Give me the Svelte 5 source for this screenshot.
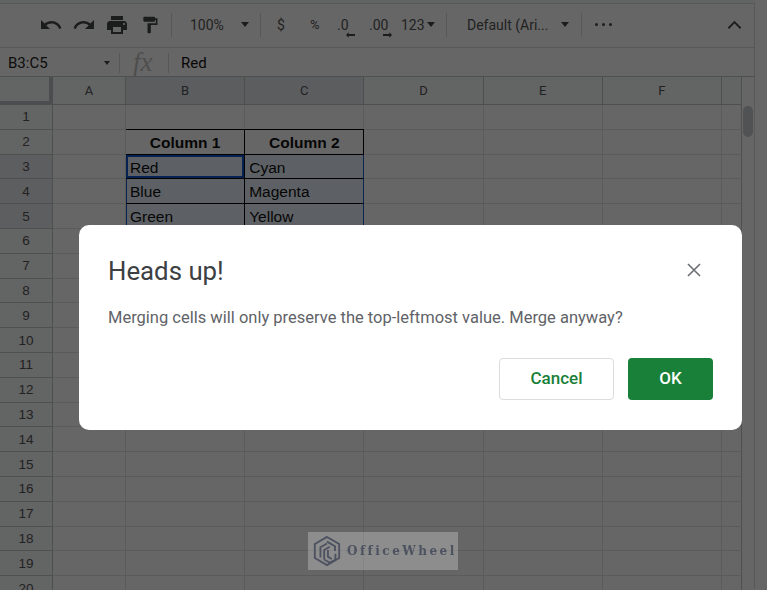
<script>
  const cols = ['A', 'B', 'C', 'D', 'E', 'F'];
  const rows = Array.from({ length: 20 }, (_, i) => i + 1);
  const data = {
    2: { B: 'Column 1', C: 'Column 2' },
    3: { B: 'Red', C: 'Cyan' },
    4: { B: 'Blue', C: 'Magenta' },
    5: { B: 'Green', C: 'Yellow' }
  };
  const icons = {
    undo: 'M12.5 8c-2.65 0-5.05.99-6.9 2.6L2 7v9h9l-3.62-3.62c1.39-1.16 3.16-1.88 5.12-1.88 3.54 0 6.55 2.31 7.6 5.5l2.37-.78C21.08 11.03 17.15 8 12.5 8z',
    redo: 'M18.4 10.6C16.55 8.99 14.15 8 11.5 8c-4.65 0-8.58 3.03-9.96 7.22L3.9 16c1.05-3.19 4.05-5.5 7.6-5.5 1.95 0 3.73.72 5.12 1.88L13 16h9V7l-3.6 3.6z',
    print: 'M19 8H5c-1.66 0-3 1.34-3 3v6h4v4h12v-4h4v-6c0-1.66-1.34-3-3-3zm-3 11H8v-5h8v5zm3-7c-.55 0-1-.45-1-1s.45-1 1-1 1 .45 1 1-.45 1-1 1zm-1-9H6v4h12V3z',
    paint: 'M18 4V3c0-.55-.45-1-1-1H5c-.55 0-1 .45-1 1v4c0 .55.45 1 1 1h12c.55 0 1-.45 1-1V6h1v4H9v11c0 .55.45 1 1 1h2c.55 0 1-.45 1-1v-9h8V4h-3z'
  };
  function cellClass(r, c) {
    const out = ['cell'];
    if (r >= 2 && r <= 5 && (c === 'B' || c === 'C')) out.push('boxed');
    if (r === 2 && (c === 'B' || c === 'C')) out.push('head');
    if (r >= 3 && r <= 5 && (c === 'B' || c === 'C')) out.push('sel');
    if (r === 3 && c === 'B') out.push('active');
    if (c === 'B' && r >= 3 && r <= 5) out.push('edgeL');
    if (c === 'C' && r >= 3 && r <= 5) out.push('edgeR');
    return out.join(' ');
  }
</script>

<div class="page">
  <div class="topstrip"></div>
  <div class="toolbar">
    <svg class="ic undo" viewBox="0 0 24 24"><path d={icons.undo} /></svg>
    <svg class="ic redo" viewBox="0 0 24 24"><path d={icons.redo} /></svg>
    <svg class="ic print" viewBox="0 0 24 24"><path d={icons.print} /></svg>
    <svg class="ic paint" viewBox="0 0 24 24"><path d={icons.paint} /></svg>
    <span class="sep s1"></span>
    <span class="tt zoomv">100%</span>
    <span class="caret c1"></span>
    <span class="sep s2"></span>
    <span class="tt dollar">$</span>
    <span class="tt pct">%</span>
    <span class="dec d1">.0<svg viewBox="0 0 10 6"><path d="M0 3l3-3v2h7v2H3v2z" /></svg></span>
    <span class="dec d2">.00<svg viewBox="0 0 10 6"><path d="M10 3L7 0v2H0v2h7v2z" /></svg></span>
    <span class="tt num">123</span>
    <span class="caret c2"></span>
    <span class="sep s3"></span>
    <span class="tt font">Default (Ari...</span>
    <span class="caret c3"></span>
    <span class="sep s4"></span>
    <span class="dots"><i></i><i></i><i></i></span>
    <svg class="chev" viewBox="0 0 16 10"><path d="M1.5 8.5L8 2l6.5 6.5" /></svg>
  </div>
  <div class="formula">
    <span class="namebox">B3:C5</span>
    <span class="caret small"></span>
    <span class="fsep a"></span>
    <span class="fx">fx</span>
    <span class="fsep b"></span>
    <span class="fval">Red</span>
  </div>
  <div class="sheet">
    <div class="grid">
      <div class="corner"></div>
      {#each cols as c}
        <div class="colhead" class:hl={c === 'B' || c === 'C'}>{c}</div>
      {/each}
      <div class="colhead blank"></div>
      {#each rows as r}
        <div class="rowhead" class:hl={r >= 3 && r <= 5}>{r}</div>
        {#each cols as c}
          <div class={cellClass(r, c)}>{data[r]?.[c] ?? ''}</div>
        {/each}
        <div class="cell blank"></div>
      {/each}
    </div>
    <div class="scrollcol"><div class="thumb"></div></div>
  </div>
</div>

<div class="scrim">
  <div class="dialog">
    <div class="titlerow">
      <h2>Heads up!</h2>
      <svg class="close" viewBox="0 0 14 14"><path d="M1 1l12 12M13 1L1 13" /></svg>
    </div>
    <p>Merging cells will only preserve the top-leftmost value. Merge anyway?</p>
    <div class="actions">
      <button class="cancel">Cancel</button>
      <button class="ok">OK</button>
    </div>
  </div>
</div>

<div class="mark">
  <svg viewBox="0 0 32 34">
    <path d="M16 2L29 9.5V24.5L16 32L3 24.5V9.5Z" />
    <path d="M16 7L24.5 12V17M9 24V13L16 9M13 26V16L19 12.500M13 26L19 29.500L25 26V20M17 16V23L21 25.500" />
  </svg>
  <span>OfficeWheel</span>
</div>

<style>
  :global(body) { margin: 0; background: #fff; overflow: hidden; }
  .page {
    width: 767px; height: 590px; overflow: hidden; background: #fff;
    font-family: "Liberation Sans", Arial, sans-serif; color: #111;
  }
  .topstrip { height: 3px; width: 755px; border-bottom: 1px solid #dadce0; background: #f6f7f8; }
  .toolbar {
    width: 755px; height: 44px; box-sizing: border-box; display: flex; align-items: center; padding-bottom: 2px;
    border-bottom: 1px solid #dadce0; border-right: 1px solid #dadce0; color: #555;
    font-family: Roboto, sans-serif;
  }
  .ic { fill: #444746; flex: none; }
  .undo { width: 24px; height: 24px; margin-left: 39px; }
  .redo { width: 24px; height: 24px; margin-left: 9px; }
  .print { width: 24px; height: 24px; margin-left: 9px; }
  .paint { width: 20px; height: 20px; margin-left: 11px; }
  .sep { width: 1px; height: 24px; background: #dadce0; flex: none; }
  .s1 { margin-left: 11px; }
  .s2 { margin-left: 11px; }
  .s3 { margin-left: 11px; }
  .s4 { margin-left: 12px; }
  .tt { font-size: 14px; flex: none; white-space: nowrap; }
  .zoomv { margin-left: 18px; width: 36px; }
  .caret { width: 0; height: 0; border: 4.5px solid transparent; border-top: 5px solid #444746; border-bottom: 0; flex: none; }
  .c1 { margin-left: 15px; }
  .dollar { margin-left: 16px; width: 8px; }
  .pct { margin-left: 25px; width: 12px; font-size: 13px; }
  .dec { position: relative; flex: none; font-size: 14px; }
  .dec svg { position: absolute; width: 9px; height: 6px; top: 15px; fill: #444746; }
  .d1 { margin-left: 15px; width: 20px; }
  .d1 svg { left: 9px; }
  .d2 { margin-left: 12px; width: 24px; }
  .d2 svg { left: 14px; }
  .num { margin-left: 8px; width: 24px; }
  .c2 { margin-left: 2px; }
  .font { margin-left: 20px; width: 85px; }
  .c3 { margin-left: 9px; }
  .dots { display: flex; gap: 4px; margin-left: 13px; flex: none; }
  .dots i { width: 3px; height: 3px; border-radius: 50%; background: #444746; }
  .chev { width: 15px; height: 10px; margin-left: 115px; fill: none; stroke: #444746; stroke-width: 2; flex: none; }

  .formula {
    width: 755px; height: 29px; box-sizing: border-box; display: flex; align-items: center; padding-top: 1px;
    border-bottom: 1px solid #c4c7c5; border-right: 1px solid #dadce0; font-family: Roboto, sans-serif;
  }
  .namebox { margin-left: 8px; width: 95px; font-size: 15px; color: #222; }
  .caret.small { border-width: 3px; border-top-width: 4px; border-bottom: 0; margin-left: 1px; }
  .fsep { width: 1px; height: 20px; background: #dadce0; flex: none; }
  .fsep.a { margin-left: 9px; }
  .fx { margin-left: 13px; width: 35px; font: italic 27px "Liberation Serif", serif; color: #c4c4c4; }
  .fsep.b { margin-left: 0; }
  .fval { margin-left: 12px; font-size: 15px; color: #111; }

  .sheet { display: flex; width: 755px; }
  .grid {
    display: grid; flex: none;
    grid-template-columns: 53px 73px 119.2px 119.2px 119.2px 119.2px 119.2px 20px;
    grid-auto-rows: 24.8px;
    grid-template-rows: 28px;
  }
  .corner { background: #f8f9fa; border-right: 4px solid #bdc1c6; border-bottom: 4px solid #bdc1c6; box-sizing: border-box; }
  .colhead, .rowhead {
    display: flex; align-items: center; justify-content: center; box-sizing: border-box;
    background: #f8f9fa; color: #555; font-size: 13px; font-family: Roboto, sans-serif;
    border-right: 1px solid #c4c7c5; border-bottom: 1px solid #c4c7c5;
  }
  .rowhead { font-family: "Liberation Sans", sans-serif; font-size: 13.500px; }
  .colhead.hl { background: #e3e8ee; }
  .rowhead.hl { background: #e8eaed; }
  .colhead.blank { border-right: 1px solid #c4c7c5; }
  .cell {
    box-sizing: border-box; border-right: 1px solid #e2e3e3; border-bottom: 1px solid #e2e3e3;
    font-size: 15.500px; line-height: 25px; padding-left: 4px; white-space: nowrap; overflow: hidden;
    position: relative;
  }
  .boxed { border-right-color: #000; border-bottom-color: #000; }
  .head { font-weight: 700; text-align: center; padding-left: 0; border-top: 1px solid #000; margin-top: -1px; height: calc(100% + 1px); }
  .sel { background: #e8f0fa; }
  .edgeL { box-shadow: inset 1px 0 0 #1a5cc4; }
  .edgeR { border-right-color: #1a5cc4; }
  .active { box-shadow: inset 0 0 0 2px #1155cc; }
  .cell.blank { border-right-color: #c4c7c5; }
  .scrollcol { flex: none; width: 13px; box-sizing: border-box; padding: 29px 1px 0 1px; border-right: 1px solid #dadce0; height: 512px; }
  .thumb { height: 31px; border-radius: 6px; background: #c8ccd0; }

  .scrim {
    position: fixed; inset: 0; background: rgba(0, 0, 0, 0.6); box-sizing: border-box;
    padding: 225px 0 0 79px;
  }
  .dialog {
    width: 663px; height: 205px; box-sizing: border-box; background: #fff; border-radius: 10px;
    padding: 30px 29px 0;
    font-family: Roboto, sans-serif;
  }
  .titlerow { display: flex; align-items: center; justify-content: space-between; height: 32px; }
  h2 { margin: 0; font-size: 25.800px; font-weight: 400; color: #3c4043; line-height: 32px; }
  .close { width: 14px; height: 14px; margin-right: 12px; margin-bottom: 2px; fill: none; stroke: #6b6e72; stroke-width: 1.600; }
  p { margin: 21px 0 0; font-size: 16.500px; line-height: 20px; color: #5f6368; }
  .actions { display: flex; justify-content: flex-end; gap: 14px; margin-top: 30px; }
  button {
    height: 42px; border-radius: 4px; font-family: Roboto, sans-serif; font-size: 17px; font-weight: 500;
    box-sizing: border-box; cursor: pointer; padding: 0 0 2px;
  }
  .cancel { width: 115px; background: #fff; border: 1px solid #dadce0; color: #188038; }
  .ok { width: 85px; background: #188038; border: 0; color: #fff; }

  .mark {
    position: fixed; left: 308px; top: 532px; width: 150px; height: 38px; display: flex; align-items: center;
    box-sizing: border-box; padding: 0 0 0 4px; background: rgba(255, 255, 255, 0.25); overflow: hidden;
  }
  .mark svg { width: 30px; height: 32px; fill: none; stroke: #4d5260; stroke-width: 2; flex: none; }
  .mark span { margin-left: 5px; font: 700 12px "DejaVu Serif", serif; letter-spacing: 2.500px; color: #4d5260; white-space: nowrap; }
</style>
